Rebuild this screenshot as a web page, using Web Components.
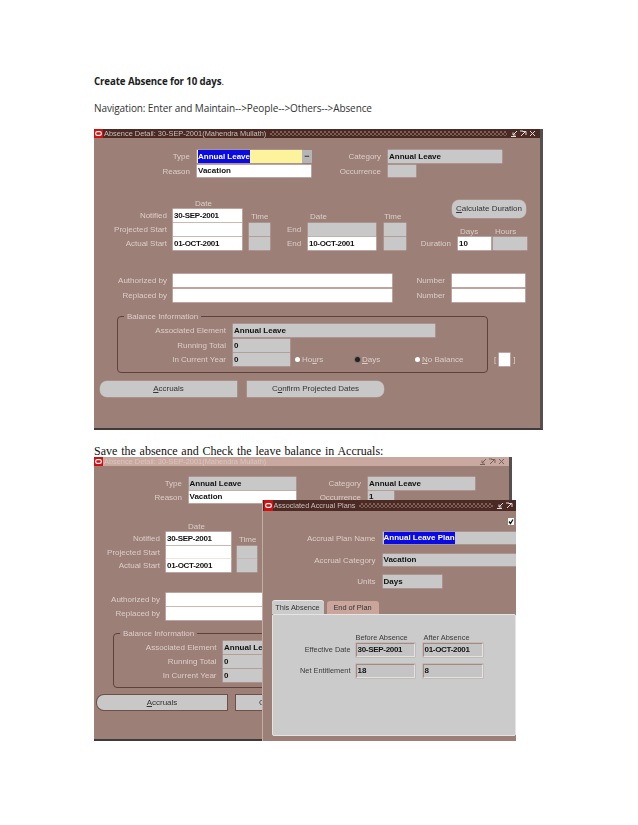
<!DOCTYPE html>
<html>
<head>
<meta charset="utf-8">
<title>Create Absence</title>
<style>
  html, body { margin: 0; background: #fff; }
</style>
</head>
<body>
<doc-page>
  <doc-heading>Create Absence for 10 days<span slot="dot">.</span></doc-heading>
  <doc-nav>Navigation: Enter and Maintain--&gt;People--&gt;Others--&gt;Absence</doc-nav>
  <ora-window style="margin-top:14px;width:449px;height:301px" caption="Absence Detail: 30-SEP-2001(Mahendra Mullath)">
    <absence-form></absence-form>
  </ora-window>
  <doc-caption>Save the absence and Check the leave balance in Accruals:</doc-caption>
  <window-stage>
    <ora-window inactive style="width:418px;height:284px" caption="Absence Detail: 30-SEP-2001(Mahendra Mullath)">
      <absence-form saved></absence-form>
    </ora-window>
    <ora-window class="front" plain caption="Associated Accrual Plans">
      <accrual-plans></accrual-plans>
    </ora-window>
  </window-stage>
</doc-page>

<script>
const UI_FONT = '"Liberation Sans", Arial, sans-serif';

class DocPage extends HTMLElement {
    constructor() {
        super();
        this.attachShadow({ mode: 'open' });
        this.shadowRoot.innerHTML = `
            <style>
                :host { display: block; padding: 76px 0 0 94px; width: 544px; height: 749px; background: #fff; }
            </style>
            <slot></slot>`;
    }
}

class DocHeading extends HTMLElement {
    constructor() {
        super();
        this.attachShadow({ mode: 'open' });
        this.shadowRoot.innerHTML = `
            <style>
                :host { display: block; font: 700 9.7px/12px "Open Sans", sans-serif; color: #1c1c1c; letter-spacing: -.1px; }
                .dot { font-weight: 400; }
            </style>
            <slot></slot><span class="dot"><slot name="dot"></slot></span>`;
    }
}

class DocNav extends HTMLElement {
    constructor() {
        super();
        this.attachShadow({ mode: 'open' });
        this.shadowRoot.innerHTML = `
            <style>
                :host { display: block; margin-top: 14px; font: 400 10px/13px "Open Sans", sans-serif; color: #333; letter-spacing: -.1px; white-space: nowrap; }
            </style>
            <slot></slot>`;
    }
}

class DocCaption extends HTMLElement {
    constructor() {
        super();
        this.attachShadow({ mode: 'open' });
        this.shadowRoot.innerHTML = `
            <style>
                :host { display: block; height: 13px; padding-top: 14px; font: 400 12px/15px "Liberation Serif", serif; color: #111; word-spacing: .8px; white-space: nowrap; }
            </style>
            <slot></slot>`;
    }
}

class WindowStage extends HTMLElement {
    constructor() {
        super();
        this.attachShadow({ mode: 'open' });
        this.shadowRoot.innerHTML = `
            <style>
                :host { display: block; position: relative; width: 422px; height: 284px; }
                ::slotted(.front) { position: absolute; left: 167.5px; top: 43px; width: 254.5px; height: 241px; }
            </style>
            <slot></slot>`;
    }
}

class OraWindow extends HTMLElement {
    constructor() {
        super();
        this.attachShadow({ mode: 'open' });
    }

    connectedCallback() {
        const caption = this.getAttribute('caption') || '';
        this.shadowRoot.innerHTML = `
            <style>
                :host { display: block; box-sizing: border-box; background: #9c7f76; border-right: 3px solid #55504e; border-bottom: 2px solid #3f3b3a; font-family: ${UI_FONT}; overflow: hidden; filter: blur(.25px); }
                :host([plain]) { border: 0; border-left: 1px solid #c3aea7; }
                .bar { display: flex; align-items: center; height: 9px; background: #4b2a26; color: #cdbfb9; font-size: 7.4px; line-height: 9px; white-space: nowrap; }
                :host([plain]) .bar { height: 10.5px; font-size: 7.3px; padding-left: 1px; }
                :host([inactive]) .bar { background: #c9a99f; color: #d9c6bf; }
                .logo { flex: none; width: 9px; height: 100%; background: #d40f0f; display: flex; align-items: center; justify-content: center; margin-right: 1px; }
                .logo svg { display: block; }
                .pattern { flex: 1; height: 5px; margin: 0 4px; background-image: repeating-conic-gradient(#7d5e55 0 25%, transparent 0 50%); background-size: 4px 4px; }
                :host([inactive]) .pattern { background: none; }
                .tools { flex: none; width: 29px; display: flex; gap: 2px; }
                :host([plain]) .tools { margin-right: -10px; }
                .tools svg { display: block; flex: none; }
                .tools path { fill: none; stroke: #e6dcd8; stroke-width: 1; }
                :host([inactive]) .tools path { stroke: #76625c; }
            </style>
            <div class="bar">
                <span class="logo"><svg width="7" height="5" viewBox="0 0 7 5"><rect x=".7" y=".7" width="5.6" height="3.6" rx="1.6" fill="none" stroke="#fff" stroke-width="1.2"/></svg></span>
                <span class="title">${caption}</span>
                <span class="pattern"></span>
                <span class="tools">
                    <svg width="7" height="7" viewBox="0 0 7 7"><path d="M6 1 2 5M2 2.5V5h2.5M0 6.5h5"/></svg>
                    <svg width="7" height="7" viewBox="0 0 7 7"><path d="M1 6 5 2M2.5 1.5H6V5M0 1h3"/></svg>
                    <svg width="7" height="7" viewBox="0 0 7 7"><path d="M1 1 6 6M6 1 1 6"/></svg>
                </span>
            </div>
            <slot></slot>`;
    }
}

class OraLabel extends HTMLElement {
    constructor() {
        super();
        this.attachShadow({ mode: 'open' });
        this.shadowRoot.innerHTML = `
            <style>
                :host { display: block; font: 400 8px/13px ${UI_FONT}; color: #dccfc9; text-align: right; white-space: nowrap; }
                :host([dark]) { color: #3a3a3a; font-size: 7.4px; }
            </style>
            <slot></slot>`;
    }
}

class OraField extends HTMLElement {
    constructor() {
        super();
        this.attachShadow({ mode: 'open' });
        this.shadowRoot.innerHTML = `
            <style>
                :host { display: block; box-sizing: border-box; height: 13px; padding-left: 1px; background: #c8c8c8; color: #111; font: 700 8px/13px ${UI_FONT}; white-space: nowrap; overflow: hidden; box-shadow: 0 0 0 .5px #b9a9a3; }
                :host([tone="white"]) { background: #fff; box-shadow: 0 0 0 .5px #d9cbc6; }
                :host([tone="yellow"]) { background: #fdf39c; }
                :host([tone="sunken"]) { background: #c4c4c4; border: 1px solid; border-color: #a58a82 #e2e2e2 #e2e2e2 #a58a82; line-height: 11px; }
                :host([date]) { letter-spacing: -.3px; }
                .txt { display: inline-block; }
                :host([selected]) .txt { background: #0a0ae6; color: #fff; }
            </style>
            <span class="txt"><slot></slot></span>`;
    }
}

class OraButton extends HTMLElement {
    constructor() {
        super();
        this.attachShadow({ mode: 'open' });
        this.shadowRoot.innerHTML = `
            <style>
                :host { display: flex; align-items: center; justify-content: center; box-sizing: border-box; background: #c8c8c8; color: #333; font: 400 8px/1 ${UI_FONT}; white-space: nowrap; box-shadow: 0 0 0 .5px #b4a29c; }
                :host([shape="left"]) { border-radius: 7px 0 0 7px; }
                :host([shape="right"]) { border-radius: 0 7px 7px 0; }
                :host([shape="pill"]) { border-radius: 7px; }
                :host([outlined]) { box-shadow: 0 0 0 1px #6f5049; }
            </style>
            <slot></slot>`;
    }
}

class OraRadio extends HTMLElement {
    constructor() {
        super();
        this.attachShadow({ mode: 'open' });
        this.shadowRoot.innerHTML = `
            <style>
                :host { display: flex; align-items: center; gap: 2px; font: 400 8px/13px ${UI_FONT}; color: #dccfc9; white-space: nowrap; }
                .dot { width: 5px; height: 5px; border-radius: 50%; background: #fff; margin-top: -1px; }
                :host([checked]) .dot { background: #222; box-shadow: 0 0 0 1px #86706a; }
            </style>
            <span class="dot"></span><span><slot></slot></span>`;
    }
}

class OraGroup extends HTMLElement {
    constructor() {
        super();
        this.attachShadow({ mode: 'open' });
        this.shadowRoot.innerHTML = `
            <style>
                :host { display: block; position: relative; box-sizing: border-box; border: 1px solid #5f423c; border-radius: 4px; }
                .legend { position: absolute; left: 6px; top: -7px; padding: 0 3px; background: #9c7f76; font: 400 8px/13px ${UI_FONT}; color: #dccfc9; white-space: nowrap; }
            </style>
            <span class="legend"><slot name="legend"></slot></span>
            <slot></slot>`;
    }
}

// measures of the two absence forms, the second window is a little narrower
const FORM_LAYOUTS = {
    draft: {
        top: 12, topLabel: 96, topGap: 7, typeW: 105, reasonW: 114, catLabel: 69, occLabel: 70, catW: 114, occW: 28, rowGap: 2,
        gridTop: 21, rows: '10.5px 14.5px 14px 13px',
        cols: '73px 6px 69px 7px 21px 11px 21px 6px 68px 8px 22px 10px 35px 7px 33px 2px 34px',
        peopleTop: 24, peopleLabel: 73, peopleGap: 6, peopleW: 219, peopleRowGap: 1.5,
        groupTop: 14.5, groupLeft: 23, groupW: 371, groupH: 57, groupLabel: 108, groupGap: 7, elemW: 202, totalW: 57, groupRowGap: 1.5,
        btnTop: 8, btnLeft: 6, btnW: 137, btnH: 16, btnGap: 10
    },
    saved: {
        top: 11, topLabel: 88, topGap: 6.5, typeW: 107.5, reasonW: 107.5, catLabel: 65, occLabel: 65, catW: 107, occW: 26, rowGap: 1,
        gridTop: 18, rows: '11px 14px 13px 13px',
        cols: '66px 6px 65px 6px 20px',
        peopleTop: 21, peopleLabel: 66, peopleGap: 6, peopleW: 100, peopleRowGap: 1,
        groupTop: 13, groupLeft: 19, groupW: 340, groupH: 55, groupLabel: 102.5, groupGap: 6.5, elemW: 202, totalW: 57, groupRowGap: 1,
        btnTop: 7, btnLeft: 3, btnW: 130, btnH: 15, btnGap: 9
    }
};

class AbsenceForm extends HTMLElement {
    constructor() {
        super();
        this.attachShadow({ mode: 'open' });
    }

    connectedCallback() {
        const saved = this.hasAttribute('saved');
        const m = saved ? FORM_LAYOUTS.saved : FORM_LAYOUTS.draft;
        // in the saved window these parts lie under the accrual window, so they are left out
        const open = html => saved ? '' : html;
        const typeField = saved
            ? `<ora-field style="width:${m.typeW}px">Annual Leave</ora-field>`
            : `<ora-field tone="yellow" selected style="width:${m.typeW}px">Annual Leave</ora-field><span class="lov">−</span>`;
        this.shadowRoot.innerHTML = `
            <style>
                :host { display: block; }
                .row { display: flex; align-items: flex-start; }
                .lov { flex: none; box-sizing: border-box; width: 10px; height: 13px; background: #b5b5b5; color: #333; font: 700 9px/12px ${UI_FONT}; text-align: center; }
                .dates { display: grid; grid-template-columns: ${m.cols}; grid-template-rows: ${m.rows}; margin-top: ${m.gridTop}px; }
                .dates ora-field { align-self: start; }
                .hdr { text-align: left; align-self: end; line-height: 11px; }
                .calc { grid-column: 14 / 18; grid-row: 1 / 3; margin: 2px 1px 5px; color: #333; }
                ora-group { margin: ${m.groupTop}px 0 0 ${m.groupLeft}px; width: ${m.groupW}px; height: ${m.groupH}px; padding-top: 7px; }
            </style>
            <div class="row" style="margin-top:${m.top}px">
                <ora-label style="width:${m.topLabel}px;margin-right:${m.topGap}px">Type</ora-label>
                ${typeField}
                <ora-label style="width:${m.catLabel}px;margin-right:7px">Category</ora-label>
                <ora-field style="width:${m.catW}px">Annual Leave</ora-field>
            </div>
            <div class="row" style="margin-top:${m.rowGap}px;height:12px">
                <ora-label style="width:${m.topLabel}px;margin-right:${m.topGap}px">Reason</ora-label>
                <ora-field tone="white" style="width:${m.reasonW}px;height:12px;line-height:12px">Vacation</ora-field>
                <ora-label style="width:${m.occLabel}px;margin-right:7px">Occurrence</ora-label>
                <ora-field style="width:${m.occW}px;height:12px;line-height:12px">${saved ? '1' : ''}</ora-field>
            </div>
            <div class="dates">
                <ora-label class="hdr" style="grid-column:3;grid-row:1;padding-left:22px">Date</ora-label>
                <ora-label style="grid-column:1/3;grid-row:2;padding-right:6px">Notified</ora-label>
                <ora-field tone="white" date style="grid-column:3/4;grid-row:2">30-SEP-2001</ora-field>
                <ora-label class="hdr" style="grid-column:5/7;grid-row:2;padding-left:2px;padding-bottom:1px">Time</ora-label>

                <ora-label style="grid-column:1/3;grid-row:3;padding-right:6px">Projected Start</ora-label>
                <ora-field tone="white" style="grid-column:3/4;grid-row:3"></ora-field>
                <ora-field style="grid-column:5;grid-row:3"></ora-field>

                <ora-label style="grid-column:1/3;grid-row:4;padding-right:6px">Actual Start</ora-label>
                <ora-field tone="white" date style="grid-column:3/4;grid-row:4">01-OCT-2001</ora-field>
                <ora-field style="grid-column:5;grid-row:4"></ora-field>
                ${open(`
                <ora-label class="hdr" style="grid-column:9;grid-row:2;padding-left:2px;padding-bottom:1px">Date</ora-label>
                <ora-label class="hdr" style="grid-column:11/13;grid-row:2;padding-bottom:1px">Time</ora-label>
                <ora-button class="calc" shape="pill"><span><u>C</u>alculate Duration</span></ora-button>
                <ora-label style="grid-column:7;grid-row:3;text-align:left;padding-left:6px">End</ora-label>
                <ora-field style="grid-column:9;grid-row:3"></ora-field>
                <ora-field style="grid-column:11;grid-row:3"></ora-field>
                <ora-label class="hdr" style="grid-column:15;grid-row:3;padding-left:2px">Days</ora-label>
                <ora-label class="hdr" style="grid-column:17;grid-row:3;padding-left:2px">Hours</ora-label>
                <ora-label style="grid-column:7;grid-row:4;text-align:left;padding-left:6px">End</ora-label>
                <ora-field tone="white" date style="grid-column:9;grid-row:4">10-OCT-2001</ora-field>
                <ora-field style="grid-column:11;grid-row:4"></ora-field>
                <ora-label style="grid-column:13;grid-row:4">Duration</ora-label>
                <ora-field tone="white" style="grid-column:15;grid-row:4">10</ora-field>
                <ora-field style="grid-column:17;grid-row:4"></ora-field>`)}
            </div>
            <div class="row" style="margin-top:${m.peopleTop}px">
                <ora-label style="width:${m.peopleLabel}px;margin-right:${m.peopleGap}px">Authorized by</ora-label>
                <ora-field tone="white" style="width:${m.peopleW}px"></ora-field>
                ${open(`<ora-label style="width:53px;margin-right:7px">Number</ora-label>
                <ora-field tone="white" style="width:73px"></ora-field>`)}
            </div>
            <div class="row" style="margin-top:${m.peopleRowGap}px">
                <ora-label style="width:${m.peopleLabel}px;margin-right:${m.peopleGap}px">Replaced by</ora-label>
                <ora-field tone="white" style="width:${m.peopleW}px"></ora-field>
                ${open(`<ora-label style="width:53px;margin-right:7px">Number</ora-label>
                <ora-field tone="white" style="width:73px"></ora-field>`)}
            </div>
            <div class="row" style="align-items:flex-end">
                <ora-group>
                    <span slot="legend">Balance Information</span>
                    <div class="row">
                        <ora-label style="width:${m.groupLabel}px;margin-right:${m.groupGap}px">Associated Element</ora-label>
                        <ora-field style="width:${m.elemW}px">Annual Leave</ora-field>
                    </div>
                    <div class="row" style="margin-top:${m.groupRowGap}px">
                        <ora-label style="width:${m.groupLabel}px;margin-right:${m.groupGap}px">Running Total</ora-label>
                        <ora-field style="width:${m.totalW}px">0</ora-field>
                    </div>
                    <div class="row" style="margin-top:${m.groupRowGap}px">
                        <ora-label style="width:${m.groupLabel}px;margin-right:${m.groupGap}px">In Current Year</ora-label>
                        <ora-field style="width:${m.totalW}px">0</ora-field>
                        ${open(`<ora-radio style="margin-left:5px;width:60px">Ho<u>u</u>rs</ora-radio>
                        <ora-radio checked style="width:60px"><u>D</u>ays</ora-radio>
                        <ora-radio><u>N</u>o Balance</ora-radio>`)}
                    </div>
                </ora-group>
                ${open(`<ora-label style="margin:0 0 7px 6px">[</ora-label>
                <ora-field tone="white" style="width:11px;margin:0 3px 7px 3px"></ora-field>
                <ora-label style="margin-bottom:7px">]</ora-label>`)}
            </div>
            <div class="row" style="margin:${m.btnTop}px 0 0 ${m.btnLeft}px">
                <ora-button shape="left" ${saved ? 'outlined' : ''} style="width:${m.btnW}px;height:${m.btnH}px"><span><u>A</u>ccruals</span></ora-button>
                ${saved
                    ? `<ora-button outlined style="width:60px;height:${m.btnH}px;margin-left:${m.btnGap}px;justify-content:flex-start;padding-left:23px"><span>C</span></ora-button>`
                    : `<ora-button shape="right" style="width:${m.btnW}px;height:${m.btnH}px;margin-left:${m.btnGap}px"><span>C<u>o</u>nfirm Projected Dates</span></ora-button>`}
            </div>`;
    }
}

class AccrualPlans extends HTMLElement {
    constructor() {
        super();
        this.attachShadow({ mode: 'open' });
        this.shadowRoot.innerHTML = `
            <style>
                :host { display: block; }
                .check { display: flex; justify-content: flex-end; height: 7px; margin: 7.5px 2px 0 0; }
                .box { width: 6px; height: 7px; background: #fff; }
                .box svg { display: block; }
                .row { display: flex; margin-top: 7px; }
                .row ora-label { width: 113px; margin-right: 7px; }
                .tabs { display: flex; gap: 3px; margin: 13px 0 0 9px; }
                .tab { box-sizing: border-box; width: 52px; height: 13px; border-radius: 3px 3px 0 0; font: 400 7.4px/14px ${UI_FONT}; text-align: center; color: #333; white-space: nowrap; }
                .tab.on { background: #cbcbcb; box-shadow: 0 -1px 0 #e8e8e8; }
                .tab.off { background: #c9a59c; }
                .panel { box-sizing: border-box; margin-left: 9px; width: 244px; height: 122px; padding-top: 17px; background: #cbcbcb; border: 1px solid #e4e4e4; border-radius: 2px; display: grid; grid-template-columns: 78px 5px 59px 8px 60px; grid-template-rows: 11px 14px 7px 14px; }
                .panel .hdr { text-align: left; line-height: 11px; }
            </style>
            <div class="check"><span class="box"><svg width="6" height="7" viewBox="0 0 6 7"><path d="M1 3.5 2.5 5.5 5 1.5" fill="none" stroke="#111" stroke-width="1.3"/></svg></span></div>
            <div class="row" style="margin-top:7px">
                <ora-label>Accrual Plan Name</ora-label>
                <ora-field selected style="flex:1;height:12px;line-height:12px">Annual Leave Plan</ora-field>
            </div>
            <div class="row" style="margin-top:9px">
                <ora-label>Accrual Category</ora-label>
                <ora-field style="flex:1;height:12px;line-height:12px">Vacation</ora-field>
            </div>
            <div class="row" style="margin-top:8px">
                <ora-label>Units</ora-label>
                <ora-field style="width:59px">Days</ora-field>
            </div>
            <div class="tabs">
                <span class="tab on">This Absence</span>
                <span class="tab off">End of Plan</span>
            </div>
            <div class="panel">
                <ora-label dark class="hdr" style="grid-column:3;grid-row:1">Before Absence</ora-label>
                <ora-label dark class="hdr" style="grid-column:5;grid-row:1;padding-left:1px">After Absence</ora-label>
                <ora-label dark style="grid-column:1;grid-row:2">Effective Date</ora-label>
                <ora-field tone="sunken" date style="grid-column:3;grid-row:2;height:14px">30-SEP-2001</ora-field>
                <ora-field tone="sunken" date style="grid-column:5;grid-row:2;height:14px">01-OCT-2001</ora-field>
                <ora-label dark style="grid-column:1;grid-row:4">Net Entitlement</ora-label>
                <ora-field tone="sunken" style="grid-column:3;grid-row:4;height:14px">18</ora-field>
                <ora-field tone="sunken" style="grid-column:5;grid-row:4;height:14px">8</ora-field>
            </div>`;
    }
}

customElements.define('doc-page', DocPage);
customElements.define('doc-heading', DocHeading);
customElements.define('doc-nav', DocNav);
customElements.define('doc-caption', DocCaption);
customElements.define('window-stage', WindowStage);
customElements.define('ora-window', OraWindow);
customElements.define('ora-label', OraLabel);
customElements.define('ora-field', OraField);
customElements.define('ora-button', OraButton);
customElements.define('ora-radio', OraRadio);
customElements.define('ora-group', OraGroup);
customElements.define('absence-form', AbsenceForm);
customElements.define('accrual-plans', AccrualPlans);
</script>
</body>
</html>
